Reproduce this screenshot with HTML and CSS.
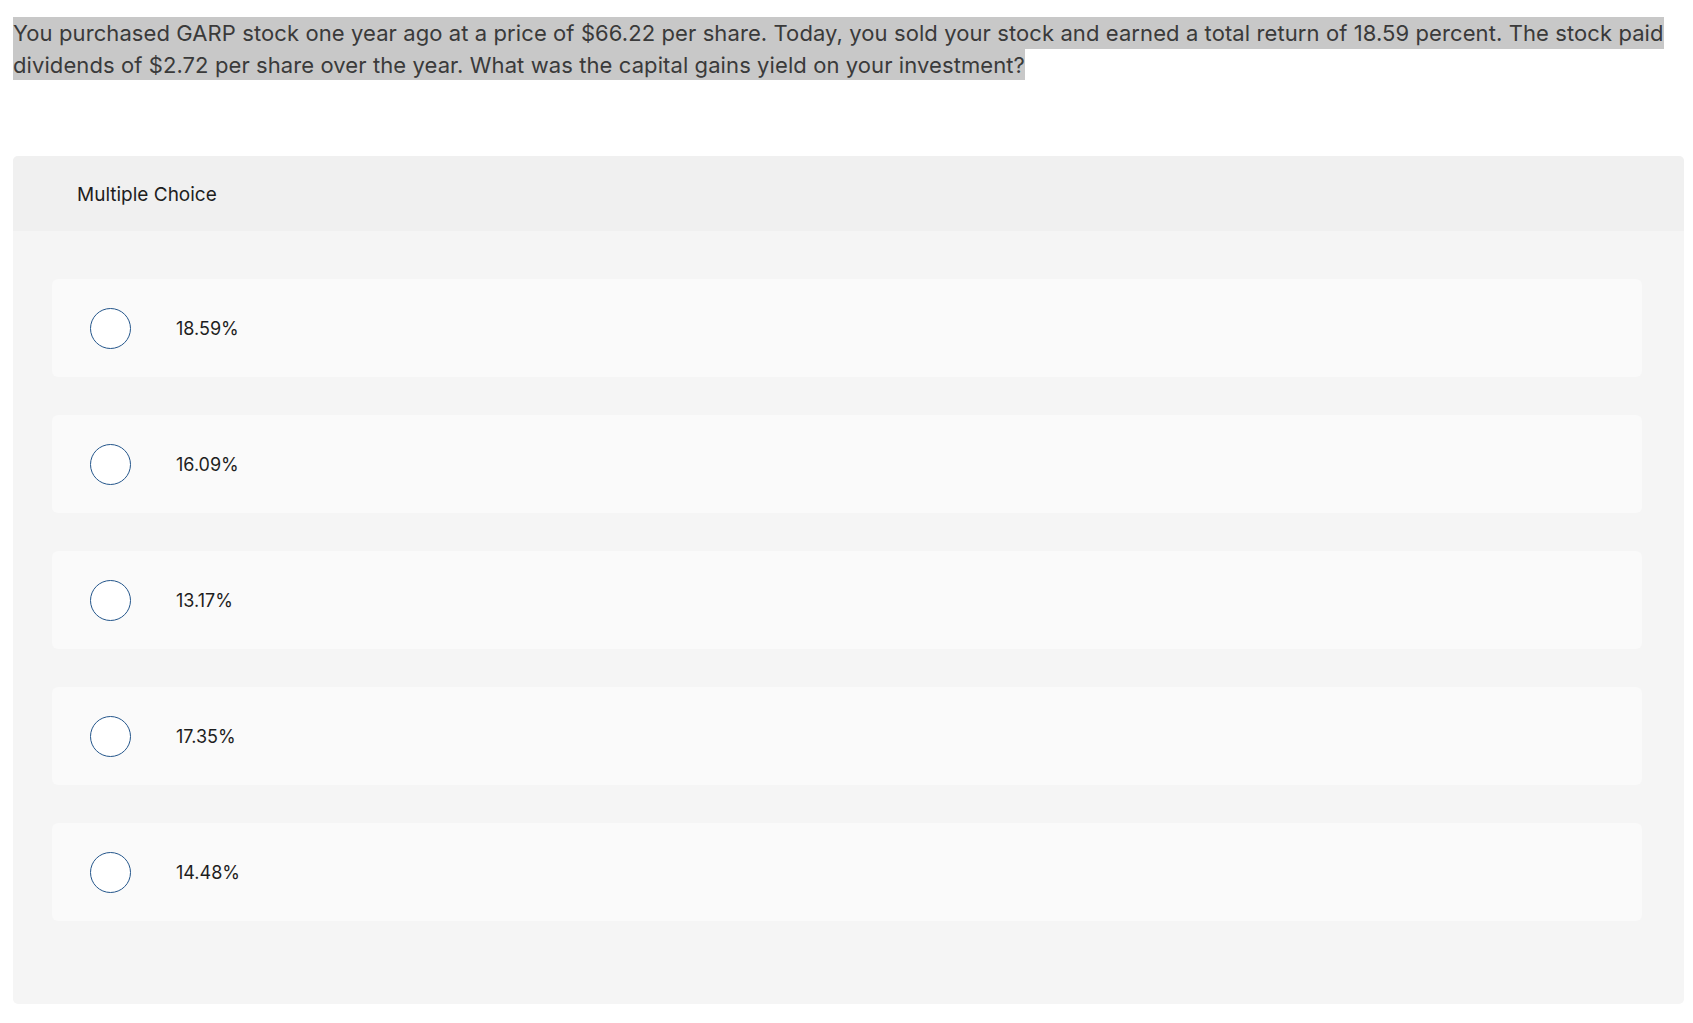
FILE: index.html
```html
<!DOCTYPE html>
<html lang="en">
<head>
<meta charset="utf-8">
<title>Multiple Choice</title>
<link rel="stylesheet" href="styles.css">
</head>
<body>
<div class="page">
  <p class="question"><span class="hl">You purchased GARP stock one year ago at a price of $66.22 per share. Today, you sold your stock and earned a total return of 18.59 percent. The stock paid dividends of $2.72 per share over the year. What was the capital gains yield on your investment?</span></p>
  <section class="card">
    <header class="card-head">Multiple Choice</header>
    <div class="card-body">
      <label class="choice"><span class="radio"></span><span class="label">18.59%</span></label>
      <label class="choice"><span class="radio"></span><span class="label">16.09%</span></label>
      <label class="choice"><span class="radio"></span><span class="label">13.17%</span></label>
      <label class="choice"><span class="radio"></span><span class="label">17.35%</span></label>
      <label class="choice"><span class="radio"></span><span class="label">14.48%</span></label>
    </div>
  </section>
</div>
</body>
</html>
```
FILE: styles.css
```css
* { box-sizing: border-box; }
html, body { margin: 0; padding: 0; background: #ffffff; }
body { font-family: "Inter", "Noto Sans", sans-serif; color: #222222; }

.page {
  padding: 18px 9px 18px 13px;
}

.question {
  margin: 0;
  font-size: 22px;
  line-height: 31.6px;
  color: #3a3a3a;
  letter-spacing: 0.09px;
}

.hl {
  background: #c8c8c8;
  padding: 2.6px 0;
}

.card {
  margin-top: 75px;
  border-radius: 5px;
  overflow: hidden;
  background: #f5f5f5;
}

.card-head {
  height: 75px;
  background: #f0f0f0;
  padding-left: 64px;
  display: flex;
  align-items: center;
  font-size: 19px;
  color: #1e1e1e;
  padding-top: 1px;
}

.card-body {
  padding: 48px 42px 83px 39px;
  display: flex;
  flex-direction: column;
  gap: 38px;
}

.choice {
  height: 98px;
  background: #fafafa;
  border-radius: 6px;
  display: flex;
  align-items: center;
  padding-left: 38px;
  cursor: pointer;
}

.radio {
  width: 41px;
  height: 41px;
  border-radius: 50%;
  border: 1.5px solid #24568b;
  background: #ffffff;
  flex: none;
}

.label {
  margin-left: 45px;
  font-size: 18px;
  color: #1e1e1e;
  padding-top: 1px;
}
```
